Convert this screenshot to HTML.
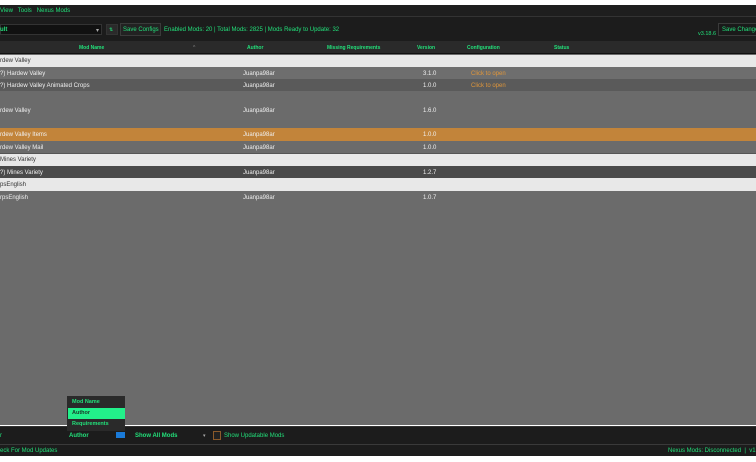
<!DOCTYPE html>
<html><head><style>
*{margin:0;padding:0;box-sizing:border-box;white-space:nowrap}
body{width:756px;height:462px;background:#fff;font-family:"Liberation Sans",sans-serif;font-size:6px;position:relative;overflow:hidden}
.a{position:absolute}
.g{color:#22e07a}
.row{position:absolute;left:0;width:756px;color:#f0f0f0;font-size:6px}
.row span{position:absolute}
</style></head><body>
<div class="a" style="left:0;top:5px;width:756px;height:12px;background:#1e1e1e;border-bottom:1px solid #333"></div>
<div class="a g" style="left:0;top:8px">View&nbsp;&nbsp; Tools&nbsp;&nbsp; Nexus Mods</div>
<div class="a" style="left:0;top:17px;width:756px;height:24px;background:#1c1c1c"></div>
<div class="a" style="left:0;top:24px;width:102px;height:11px;background:#111;border:1px solid #333"></div>
<div class="a g" style="left:0;top:27px;font-weight:bold">ult</div>
<div class="a" style="left:96px;top:27px;color:#aaa">▾</div>
<div class="a" style="left:106px;top:24px;width:12px;height:11px;background:#2a2a2a;border:1px solid #333"></div>
<div class="a g" style="left:109px;top:27px;font-size:5px">⇅</div>
<div class="a g" style="left:120px;top:23px;width:41px;height:13px;background:#222;border:1px solid #3a3a3a;padding:3px 2px">Save Configs</div>
<div class="a g" style="left:164px;top:27px">Enabled Mods: 20 | Total Mods: 2825 | Mods Ready to Update: 32</div>
<div class="a g" style="left:698px;top:31px;font-size:5.5px">v3.18.6</div>
<div class="a g" style="left:718px;top:23px;width:40px;height:13px;background:#1a1a1a;border:1px solid #3a3a3a;padding:3px 3px">Save Changes</div>
<div class="a" style="left:0;top:41px;width:756px;height:13px;background:#2a2a2a;border-bottom:1px solid #111"></div>
<div class="a g" style="top:45px;left:79px;font-size:5px;font-weight:bold">Mod Name</div>
<div class="a" style="top:45px;left:193px;font-size:5px;color:#888">^</div>
<div class="a g" style="top:45px;left:247px;font-size:5px;font-weight:bold">Author</div>
<div class="a g" style="top:45px;left:327px;font-size:5px;font-weight:bold">Missing Requirements</div>
<div class="a g" style="top:45px;left:417px;font-size:5px;font-weight:bold">Version</div>
<div class="a g" style="top:45px;left:467px;font-size:5px;font-weight:bold">Configuration</div>
<div class="a g" style="top:45px;left:554px;font-size:5px;font-weight:bold">Status</div>
<div class="a" style="left:0;top:54px;width:756px;height:371px;background:#6b6b6b"></div>
<div class="row" style="top:55px;height:12px;background:#e8e8e8;color:#333"><span style="left:0;top:3px">rdew Valley</span></div>
<div class="row" style="top:67px;height:12px;background:#6e6e6e"><span style="left:0;top:4px">?) Hardew Valley</span><span style="left:243px;top:4px">Juanpa98ar</span><span style="left:423px;top:4px">3.1.0</span><span style="left:471px;top:4px;color:#e0963a">Click to open</span></div>
<div class="row" style="top:79px;height:12px;background:#5a5a5a"><span style="left:0;top:4px">?) Hardew Valley Animated Crops</span><span style="left:243px;top:4px">Juanpa98ar</span><span style="left:423px;top:4px">1.0.0</span><span style="left:471px;top:4px;color:#e0963a">Click to open</span></div>
<div class="row" style="top:91px;height:37px;background:#6b6b6b"><span style="left:0;top:17px">rdew Valley</span><span style="left:243px;top:17px">Juanpa98ar</span><span style="left:423px;top:17px">1.6.0</span></div>
<div class="row" style="top:128px;height:13px;background:#c2843a"><span style="left:0;top:4px">rdew Valley Items</span><span style="left:243px;top:4px">Juanpa98ar</span><span style="left:423px;top:4px">1.0.0</span></div>
<div class="row" style="top:141px;height:12px;background:#6b6b6b"><span style="left:0;top:4px">rdew Valley Mail</span><span style="left:243px;top:4px">Juanpa98ar</span><span style="left:423px;top:4px">1.0.0</span></div>
<div class="row" style="top:153px;height:13px;background:#e8e8e8;color:#333;border-top:1px solid #555"><span style="left:0;top:3px">Mines Variety</span></div>
<div class="row" style="top:166px;height:12px;background:#4a4a4a"><span style="left:0;top:4px">?) Mines Variety</span><span style="left:243px;top:4px">Juanpa98ar</span><span style="left:423px;top:4px">1.2.7</span></div>
<div class="row" style="top:178px;height:13px;background:#e8e8e8;color:#333"><span style="left:0;top:4px">psEnglish</span></div>
<div class="row" style="top:191px;height:12px;background:#6b6b6b"><span style="left:0;top:4px">rpsEnglish</span><span style="left:243px;top:4px">Juanpa98ar</span><span style="left:423px;top:4px">1.0.7</span></div>
<div class="a" style="left:67px;top:396px;width:58px;height:35px;background:#2a2a2a;z-index:2"></div>
<div class="a g" style="left:72px;top:399px;font-size:5.5px;font-weight:bold;z-index:3">Mod Name</div>
<div class="a" style="left:68px;top:408px;width:57px;height:11px;background:#22f08a;z-index:3"></div>
<div class="a" style="left:72px;top:410px;font-size:5.5px;font-weight:bold;color:#1a3a2a;z-index:4">Author</div>
<div class="a g" style="left:72px;top:421px;font-size:5.5px;font-weight:bold;z-index:3">Requirements</div>
<div class="a" style="left:0;top:426px;width:756px;height:18px;background:#1c1c1c;border-top:1px solid #333"></div>
<div class="a g" style="left:0;top:433px">r</div>
<div class="a g" style="left:69px;top:433px;font-weight:bold">Author</div>
<div class="a" style="left:116px;top:432px;width:9px;height:6px;background:#1a7ad8"></div>
<div class="a g" style="left:135px;top:433px;font-weight:bold">Show All Mods</div>
<div class="a" style="left:203px;top:433px;color:#aaa;font-size:5px">▾</div>
<div class="a" style="left:213px;top:431px;width:8px;height:9px;border:1px solid #8a5a2a;background:#222"></div>
<div class="a g" style="left:224px;top:433px">Show Updatable Mods</div>
<div class="a" style="left:0;top:444px;width:756px;height:12px;background:#1c1c1c;border-top:1px solid #3a3a3a"></div>
<div class="a g" style="left:0;top:448px">eck For Mod Updates</div>
<div class="a g" style="left:668px;top:448px">Nexus Mods: Disconnected&nbsp; |&nbsp; v1</div>
</body></html>
